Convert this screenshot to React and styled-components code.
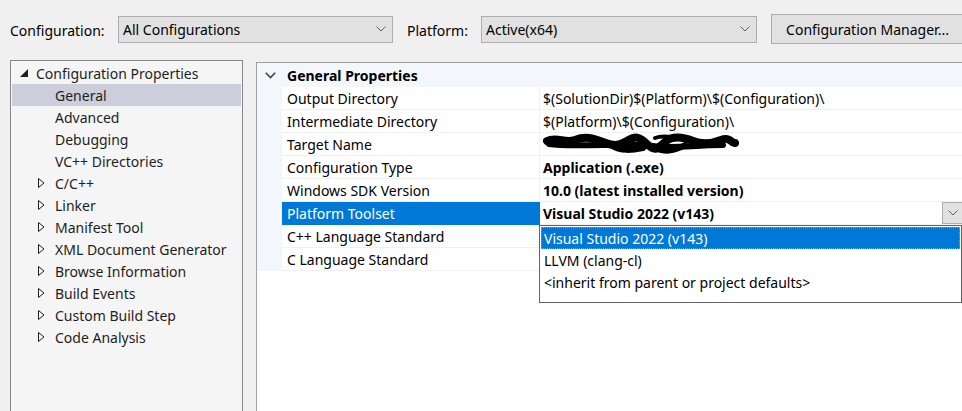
import styled, { createGlobalStyle } from 'styled-components';

const GlobalStyle = createGlobalStyle`
  html, body {
    margin: 0;
    padding: 0;
    background: #f0f0f0;
  }
  body {
    font-family: 'Noto Sans', 'Open Sans', sans-serif;
    font-size: 14px;
    color: #000;
  }
`;

const treeItems = [
  { label: 'Configuration Properties', level: 0, expanded: true },
  { label: 'General', level: 1, selected: true },
  { label: 'Advanced', level: 1 },
  { label: 'Debugging', level: 1 },
  { label: 'VC++ Directories', level: 1 },
  { label: 'C/C++', level: 1, collapsed: true },
  { label: 'Linker', level: 1, collapsed: true },
  { label: 'Manifest Tool', level: 1, collapsed: true },
  { label: 'XML Document Generator', level: 1, collapsed: true },
  { label: 'Browse Information', level: 1, collapsed: true },
  { label: 'Build Events', level: 1, collapsed: true },
  { label: 'Custom Build Step', level: 1, collapsed: true },
  { label: 'Code Analysis', level: 1, collapsed: true },
];

const properties = [
  { name: 'Output Directory', value: '$(SolutionDir)$(Platform)\\$(Configuration)\\' },
  { name: 'Intermediate Directory', value: '$(Platform)\\$(Configuration)\\' },
  { name: 'Target Name', hidden: true },
  { name: 'Configuration Type', value: 'Application (.exe)', bold: true },
  { name: 'Windows SDK Version', value: '10.0 (latest installed version)', bold: true },
  { name: 'Platform Toolset', value: 'Visual Studio 2022 (v143)', bold: true, selected: true },
  { name: 'C++ Language Standard', value: '' },
  { name: 'C Language Standard', value: '' },
];

const options = [
  { label: 'Visual Studio 2022 (v143)', active: true },
  { label: 'LLVM (clang-cl)' },
  { label: '<inherit from parent or project defaults>' },
];

const ComboArrow = () => (
  <svg width="10" height="6" viewBox="0 0 10 6">
    <polyline points="0.5,0.5 5,5 9.5,0.5" fill="none" stroke="#606060" strokeWidth="1" />
  </svg>
);

const ExpandedIcon = () => (
  <svg width="8" height="8" viewBox="0 0 8 8">
    <polygon points="8,0 8,8 0,8" fill="#1e1e1e" />
  </svg>
);

const CollapsedIcon = () => (
  <svg width="7" height="10" viewBox="0 0 7 10">
    <polygon points="0.5,0.5 6,5 0.5,9.5" fill="none" stroke="#1e1e1e" strokeWidth="1" />
  </svg>
);

const CategoryChevron = () => (
  <svg width="11" height="7" viewBox="0 0 11 7">
    <polyline points="0.8,0.8 5.5,5.5 10.2,0.8" fill="none" stroke="#444" strokeWidth="1.6" />
  </svg>
);

// redaction blob drawn over the target name
const Scribble = () => (
  <svg width="196" height="22" viewBox="0 0 196 22">
    <g fill="none" stroke="#000" strokeLinecap="round" strokeLinejoin="round">
      <path
        d="M4 8 C 14 3, 22 11, 32 7 S 50 5, 60 9 S 76 13, 84 8 S 96 3, 104 11 S 114 16, 122 9 S 140 4, 150 8 S 168 11, 178 7 S 188 11, 192 10"
        strokeWidth="8"
      />
      <path d="M6 11 C 20 13, 40 12, 60 12 S 90 10, 110 13 S 150 12, 180 12" strokeWidth="6" />
      <path d="M68 12 C 78 19, 90 17, 100 15 M110 14 C 120 20, 132 18, 142 12" strokeWidth="6" />
      <path d="M112 5 C 120 2, 130 4, 138 6" strokeWidth="4" />
    </g>
  </svg>
);

export default function App() {
  return (
    <>
      <GlobalStyle />
      <Page>
        <TopBar>
          <FieldLabel $width={108}>Configuration:</FieldLabel>
          <Combo $width={275}>
            <span>All Configurations</span>
            <ComboArrow />
          </Combo>
          <FieldLabel $width={74} $gap={14}>Platform:</FieldLabel>
          <Combo $width={276}>
            <span>Active(x64)</span>
            <ComboArrow />
          </Combo>
          <ManagerButton>Configuration Manager...</ManagerButton>
        </TopBar>

        <Main>
          <TreePanel>
            {treeItems.map((item) => (
              <TreeRow key={item.label} $selected={item.selected}>
                <TreeIcon $level={item.level}>
                  {item.expanded && <ExpandedIcon />}
                  {item.collapsed && <CollapsedIcon />}
                </TreeIcon>
                <span>{item.label}</span>
              </TreeRow>
            ))}
          </TreePanel>

          <GridPanel>
            <CategoryRow>
              <CategoryToggle>
                <CategoryChevron />
              </CategoryToggle>
              <span>General Properties</span>
            </CategoryRow>
            {properties.map((prop) => (
              <PropRow key={prop.name}>
                <Gutter />
                <NameCell $selected={prop.selected}>{prop.name}</NameCell>
                <ValueCell $bold={prop.bold}>
                  {prop.hidden ? <Scribble /> : <span>{prop.value}</span>}
                  {prop.selected && (
                    <EditButton>
                      <ComboArrow />
                    </EditButton>
                  )}
                </ValueCell>
              </PropRow>
            ))}
          </GridPanel>
        </Main>

        <DropList>
          {options.map((opt) => (
            <DropItem key={opt.label} $active={opt.active}>
              {opt.label}
            </DropItem>
          ))}
        </DropList>
      </Page>
    </>
  );
}

const Page = styled.div`
  position: relative;
  width: 962px;
  height: 411px;
  overflow: hidden;
  background: #f0f0f0;
`;

const TopBar = styled.div`
  display: flex;
  align-items: center;
  height: 30px;
  padding: 14px 0 0 10px;
`;

const FieldLabel = styled.div`
  width: ${({ $width }) => $width}px;
  margin-left: ${({ $gap }) => $gap || 0}px;
  flex-shrink: 0;
  color: #000;
  padding-top: 2px;
`;

const Combo = styled.div`
  display: flex;
  align-items: center;
  justify-content: space-between;
  box-sizing: border-box;
  width: ${({ $width }) => $width}px;
  height: 27px;
  padding: 0 6px 0 4px;
  flex-shrink: 0;
  background: #e1e1e1;
  border: 1px solid #adadad;
  color: #000;
`;

const ManagerButton = styled.div`
  display: flex;
  align-items: center;
  justify-content: center;
  box-sizing: border-box;
  width: 193px;
  height: 30px;
  margin-left: 14px;
  flex-shrink: 0;
  background: #e1e1e1;
  border: 1px solid #adadad;
  color: #000;
`;

const Main = styled.div`
  display: flex;
  align-items: flex-start;
  margin-top: 16px;
  padding-left: 10px;
`;

const TreePanel = styled.div`
  box-sizing: border-box;
  width: 233px;
  height: 380px;
  flex-shrink: 0;
  padding: 1px;
  background: #f5f5f5;
  border: 1px solid #828790;
`;

const TreeRow = styled.div`
  display: flex;
  align-items: center;
  height: 22px;
  background: ${({ $selected }) => ($selected ? '#cccedb' : 'transparent')};
  color: #1e1e1e;
`;

const TreeIcon = styled.span`
  display: flex;
  align-items: center;
  justify-content: flex-end;
  box-sizing: border-box;
  width: ${({ $level }) => ($level === 0 ? 24 : 43)}px;
  padding-right: ${({ $level }) => ($level === 0 ? 8 : 10)}px;
  flex-shrink: 0;
`;

const GridPanel = styled.div`
  box-sizing: border-box;
  width: 708px;
  height: 380px;
  margin: 2px 0 0 13px;
  flex-shrink: 0;
  background: #fff;
  border: 1px solid #a0a0a0;
`;

const CategoryRow = styled.div`
  display: flex;
  align-items: center;
  height: 24px;
  background: #f3f6fb;
  font-weight: 700;
  color: #000;
`;

const CategoryToggle = styled.span`
  display: flex;
  align-items: center;
  width: 30px;
  padding-left: 8px;
  box-sizing: border-box;
`;

const PropRow = styled.div`
  display: grid;
  grid-template-columns: 25px 258px 1fr;
  height: 23px;
`;

const Gutter = styled.div`
  background: #f3f6fb;
`;

const NameCell = styled.div`
  display: flex;
  align-items: center;
  box-sizing: border-box;
  padding-left: 5px;
  border-bottom: 1px solid ${({ $selected }) => ($selected ? '#0078d7' : '#f0f0f0')};
  border-right: 1px solid ${({ $selected }) => ($selected ? '#0078d7' : '#f0f0f0')};
  background: ${({ $selected }) => ($selected ? '#0078d7' : '#fff')};
  color: ${({ $selected }) => ($selected ? '#fff' : '#000')};
  white-space: nowrap;
`;

const ValueCell = styled.div`
  display: flex;
  align-items: center;
  justify-content: space-between;
  box-sizing: border-box;
  padding-left: 3px;
  border-bottom: 1px solid #f0f0f0;
  font-weight: ${({ $bold }) => ($bold ? 700 : 400)};
  white-space: nowrap;
  overflow: hidden;
`;

const EditButton = styled.div`
  display: flex;
  align-items: center;
  justify-content: center;
  box-sizing: border-box;
  width: 21px;
  height: 22px;
  background: #e1e1e1;
  border: 1px solid #adadad;
`;

const DropList = styled.div`
  position: absolute;
  left: 539px;
  top: 225px;
  box-sizing: border-box;
  width: 423px;
  height: 78px;
  padding: 1px 1px 0;
  background: #fff;
  border: 1px solid #646464;
`;

const DropItem = styled.div`
  display: flex;
  align-items: center;
  box-sizing: border-box;
  height: 22px;
  padding-left: 3px;
  background: ${({ $active }) => ($active ? '#0078d7' : '#fff')};
  color: ${({ $active }) => ($active ? '#fff' : '#000')};
  outline: ${({ $active }) => ($active ? '1px dotted #e88a2e' : 'none')};
  outline-offset: -1px;
  white-space: nowrap;
`;
